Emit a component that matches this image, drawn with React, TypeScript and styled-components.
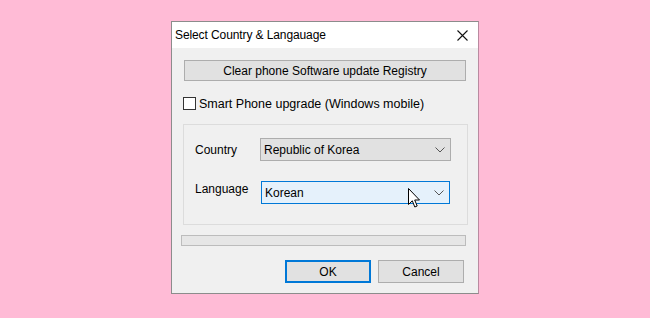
import React from 'react';
import styled, { createGlobalStyle } from 'styled-components';

const Global = createGlobalStyle`
  html, body {
    margin: 0;
    padding: 0;
    background: #ffbbd6;
  }
  body {
    font-family: "Liberation Sans", Arial, sans-serif;
    font-size: 12px;
    color: #000;
  }
`;

const Page = styled.div`
  width: 650px;
  height: 318px;
  box-sizing: border-box;
  padding: 21px 0 0 171px;
`;

const Dialog = styled.div`
  width: 308px;
  height: 273px;
  box-sizing: border-box;
  border: 1px solid #8c8c8c;
  border-right-color: #b98aa0;
  background: #f0f0f0;
  display: flex;
  flex-direction: column;
  position: relative;
`;

const TitleBar = styled.div`
  height: 26px;
  background: #fff;
  display: flex;
  align-items: center;
  justify-content: space-between;
  padding: 0 10px 0 3px;
`;

const Title = styled.span`
  font-size: 12px;
  letter-spacing: -0.1px;
`;

const Body = styled.div`
  display: flex;
  flex-direction: column;
  padding: 12px 0 0 0;
`;

const WideButton = styled.div`
  margin-left: 12px;
  width: 282px;
  height: 21px;
  box-sizing: border-box;
  background: #e1e1e1;
  border: 1px solid #adadad;
  display: flex;
  align-items: center;
  justify-content: center;
  font-size: 12px;
`;

const CheckRow = styled.label`
  margin: 16px 0 0 11px;
  display: flex;
  align-items: center;
  gap: 3px;
  height: 13px;
  font-size: 12.5px;
`;

const Box = styled.span`
  width: 13px;
  height: 13px;
  box-sizing: border-box;
  border: 1px solid #333;
  background: #fff;
`;

const Group = styled.div`
  margin: 14px 0 0 11px;
  width: 285px;
  height: 101px;
  box-sizing: border-box;
  border: 1px solid #dcdcdc;
  padding: 13px 0 0 11px;
  display: flex;
  flex-direction: column;
  gap: 20px;
`;

const Field = styled.div<{ $labelShift: number }>`
  display: flex;
  align-items: center;
  & > span {
    width: 65px;
    position: relative;
    top: ${(p) => p.$labelShift}px;
  }
`;

const Select = styled.div<{ $focus?: boolean; $offset: number }>`
  margin-left: ${(p) => p.$offset}px;
  width: ${(p) => (p.$focus ? 189 : 191)}px;
  height: 23px;
  box-sizing: border-box;
  border: 1px solid ${(p) => (p.$focus ? '#0078d7' : '#adadad')};
  background: ${(p) => (p.$focus ? '#e5f1fb' : '#e1e1e1')};
  display: flex;
  align-items: center;
  justify-content: space-between;
  padding: 0 5px 0 3px;
  font-size: 12px;
`;

const Progress = styled.div`
  margin: 10px 0 0 9px;
  width: 285px;
  height: 11px;
  box-sizing: border-box;
  background: #e6e6e6;
  border: 1px solid #bcbcbc;
`;

const Actions = styled.div`
  margin: 14px 14px 0 0;
  display: flex;
  justify-content: flex-end;
  gap: 7px;
`;

const Btn = styled.div<{ $primary?: boolean }>`
  width: 86px;
  height: 23px;
  box-sizing: border-box;
  background: #e1e1e1;
  border: ${(p) => (p.$primary ? '2px solid #0078d7' : '1px solid #adadad')};
  display: flex;
  align-items: center;
  justify-content: center;
  font-size: 12px;
`;

const Cursor = styled.svg`
  position: absolute;
  left: 236px;
  top: 166px;
`;

const Chevron = () => (
  <svg width="10" height="6" viewBox="0 0 10 6">
    <path d="M0.5 0.5 L5 5 L9.5 0.5" fill="none" stroke="#555" strokeWidth="1" />
  </svg>
);

export default function App() {
  return (
    <>
      <Global />
      <Page>
        <Dialog>
          <TitleBar>
            <Title>Select Country &amp; Langauage</Title>
            <svg width="11" height="11" viewBox="0 0 11 11">
              <path d="M0.5 0.5 L10.5 10.5 M10.5 0.5 L0.5 10.5" stroke="#111" strokeWidth="1.1" />
            </svg>
          </TitleBar>
          <Body>
            <WideButton>Clear phone Software update Registry</WideButton>
            <CheckRow>
              <Box />
              <span>Smart Phone upgrade (Windows mobile)</span>
            </CheckRow>
            <Group>
              <Field $labelShift={0}>
                <span>Country</span>
                <Select $offset={0}>
                  Republic of Korea
                  <Chevron />
                </Select>
              </Field>
              <Field $labelShift={-4}>
                <span>Language</span>
                <Select $focus $offset={1}>
                  Korean
                  <Chevron />
                </Select>
              </Field>
            </Group>
            <Progress />
            <Actions>
              <Btn $primary>OK</Btn>
              <Btn>Cancel</Btn>
            </Actions>
          </Body>
          <Cursor width="13" height="21" viewBox="0 0 13 21">
            <path
              d="M0.5 0.5 L0.5 16.5 L4.3 12.8 L6.8 19 L9.2 18 L6.7 12 L11.5 12 Z"
              fill="#fff"
              stroke="#000"
              strokeWidth="1"
              strokeLinejoin="miter"
            />
          </Cursor>
        </Dialog>
      </Page>
    </>
  );
}
